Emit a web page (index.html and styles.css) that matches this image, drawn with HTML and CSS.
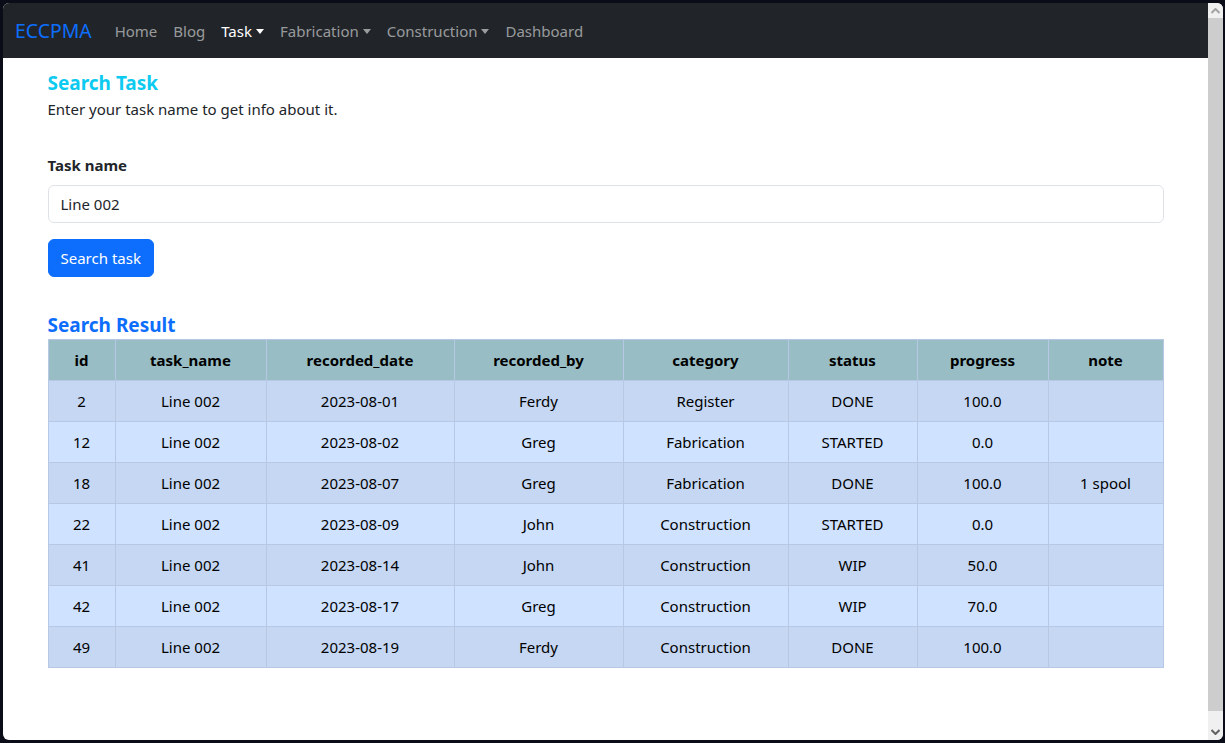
FILE: index.html
```html
<!DOCTYPE html>
<html lang="en">
<head>
<meta charset="utf-8">
<title>ECCPMA - Search Task</title>
<link rel="stylesheet" href="styles.css">
</head>
<body>
<div class="window">
  <div class="viewport">
    <nav class="navbar">
      <a class="brand" href="#">ECCPMA</a>
      <ul class="nav">
        <li><a class="nav-link" href="#">Home</a></li>
        <li><a class="nav-link" href="#">Blog</a></li>
        <li><a class="nav-link active dropdown" href="#">Task</a></li>
        <li><a class="nav-link dropdown" href="#">Fabrication</a></li>
        <li><a class="nav-link dropdown" href="#">Construction</a></li>
        <li><a class="nav-link" href="#">Dashboard</a></li>
      </ul>
    </nav>
    <main class="container">
      <h5 class="title-info">Search Task</h5>
      <p class="lead-text">Enter your task name to get info about it.</p>
      <form class="search-form">
        <label class="form-label" for="task">Task name</label>
        <input class="form-control" id="task" type="text" value="Line 002">
        <button class="btn-primary" type="button">Search task</button>
      </form>
      <h5 class="title-primary">Search Result</h5>
      <table class="result-table">
        <colgroup>
          <col class="c-id"><col class="c-name"><col class="c-date"><col class="c-by">
          <col class="c-cat"><col class="c-status"><col class="c-prog"><col class="c-note">
        </colgroup>
        <thead>
          <tr><th>id</th><th>task_name</th><th>recorded_date</th><th>recorded_by</th><th>category</th><th>status</th><th>progress</th><th>note</th></tr>
        </thead>
        <tbody>
          <tr><td>2</td><td>Line 002</td><td>2023-08-01</td><td>Ferdy</td><td>Register</td><td>DONE</td><td>100.0</td><td></td></tr>
          <tr><td>12</td><td>Line 002</td><td>2023-08-02</td><td>Greg</td><td>Fabrication</td><td>STARTED</td><td>0.0</td><td></td></tr>
          <tr><td>18</td><td>Line 002</td><td>2023-08-07</td><td>Greg</td><td>Fabrication</td><td>DONE</td><td>100.0</td><td>1 spool</td></tr>
          <tr><td>22</td><td>Line 002</td><td>2023-08-09</td><td>John</td><td>Construction</td><td>STARTED</td><td>0.0</td><td></td></tr>
          <tr><td>41</td><td>Line 002</td><td>2023-08-14</td><td>John</td><td>Construction</td><td>WIP</td><td>50.0</td><td></td></tr>
          <tr><td>42</td><td>Line 002</td><td>2023-08-17</td><td>Greg</td><td>Construction</td><td>WIP</td><td>70.0</td><td></td></tr>
          <tr><td>49</td><td>Line 002</td><td>2023-08-19</td><td>Ferdy</td><td>Construction</td><td>DONE</td><td>100.0</td><td></td></tr>
        </tbody>
      </table>
    </main>
  </div>
  <div class="scrollbar">
    <div class="sb-btn sb-up"><svg width="9" height="6" viewBox="0 0 9 6"><path d="M0.5 5 L4.5 1 L8.5 5" fill="none" stroke="#a3a3a3" stroke-width="2"/></svg></div>
    <div class="sb-thumb"></div>
    <div class="sb-track"><div class="sb-btn sb-down"><svg width="9" height="6" viewBox="0 0 9 6"><path d="M0.5 1 L4.5 5 L8.5 1" fill="none" stroke="#606060" stroke-width="2"/></svg></div></div>
  </div>
</div>
</body>
</html>
```

FILE: styles.css
```css
* { box-sizing: border-box; }

html, body {
  margin: 0;
  height: 100%;
}

body {
  background: #0a0c17;
  font-family: "Noto Sans", "Open Sans", sans-serif;
  font-size: 15px;
  line-height: 24px;
  color: #212529;
}

.window {
  margin: 3px 2px 3px 3px;
  height: 737px;
  background: #fff;
  border-radius: 6px;
  overflow: hidden;
  display: flex;
}

.viewport {
  flex: 1;
  min-width: 0;
}

/* Navbar */
.navbar {
  background: #212529;
  height: 55px;
  display: flex;
  align-items: center;
  padding: 0 12px;
}

.brand {
  color: #0d6efd;
  font-size: 19.4px;
  text-decoration: none;
  margin-right: 15px;
  line-height: 30px;
}

.nav {
  list-style: none;
  display: flex;
  margin: 0;
  padding: 0;
}

.nav-link {
  display: block;
  padding: 8px;
  color: rgba(255, 255, 255, 0.55);
  text-decoration: none;
}

.nav-link.active { color: #fff; }

.nav-link.dropdown::after {
  content: "";
  display: inline-block;
  margin-left: 4px;
  vertical-align: 3px;
  border-top: 5px solid;
  border-left: 4px solid transparent;
  border-right: 4px solid transparent;
}

/* Main */
.container {
  max-width: 1140px;
  margin: 0 auto;
  padding: 13px 12px 0;
}

h5 {
  margin: 0;
  font-size: 19px;
  font-weight: 700;
  line-height: 24px;
}

.title-info { color: #0dcaf0; }
.title-primary { color: #0d6efd; margin-top: 36px; }

.lead-text {
  margin: 2px 0 0;
}

.search-form {
  margin-top: 32px;
  display: flex;
  flex-direction: column;
  align-items: flex-start;
}

.form-label {
  font-weight: 700;
  margin-bottom: 8px;
}

.form-control {
  width: 100%;
  height: 38px;
  padding: 6px 12px;
  font: inherit;
  color: #212529;
  border: 1px solid #dee2e6;
  border-radius: 6px;
  background: #fff;
}

.btn-primary {
  margin-top: 16px;
  height: 38px;
  padding: 6px 12px;
  font: inherit;
  color: #fff;
  background: #0d6efd;
  border: 1px solid #0d6efd;
  border-radius: 6px;
}

/* Table */
.result-table {
  width: calc(100% - 1px);
  border-collapse: collapse;
  table-layout: fixed;
  margin-top: 2px;
  color: #000;
}

.result-table th,
.result-table td {
  border: 1px solid #b6c8e4;
  padding: 8px;
  height: 41px;
  text-align: center;
  line-height: 24px;
}

.result-table thead th {
  background: #98bdc4;
  font-weight: 700;
  border-color: #b6c8e4;
}

.result-table tbody tr:nth-child(odd) td { background: #c5d7f2; }
.result-table tbody tr:nth-child(even) td { background: #cfe2ff; }

.c-id { width: 67px; }
.c-name { width: 151px; }
.c-date { width: 188px; }
.c-by { width: 169px; }
.c-cat { width: 165px; }
.c-status { width: 129px; }
.c-prog { width: 131px; }
.c-note { width: 115px; }

/* Fake scrollbar */
.scrollbar {
  width: 15px;
  display: flex;
  flex-direction: column;
  background: #f0f0f0;
}

.sb-btn {
  height: 17px;
  display: flex;
  align-items: center;
  justify-content: center;
}

.sb-up { height: 15px; }

.sb-thumb {
  flex: 1;
  background: #cdcdcd;
}

.sb-track {
  height: 29px;
  display: flex;
  flex-direction: column;
  justify-content: flex-end;
}
```
